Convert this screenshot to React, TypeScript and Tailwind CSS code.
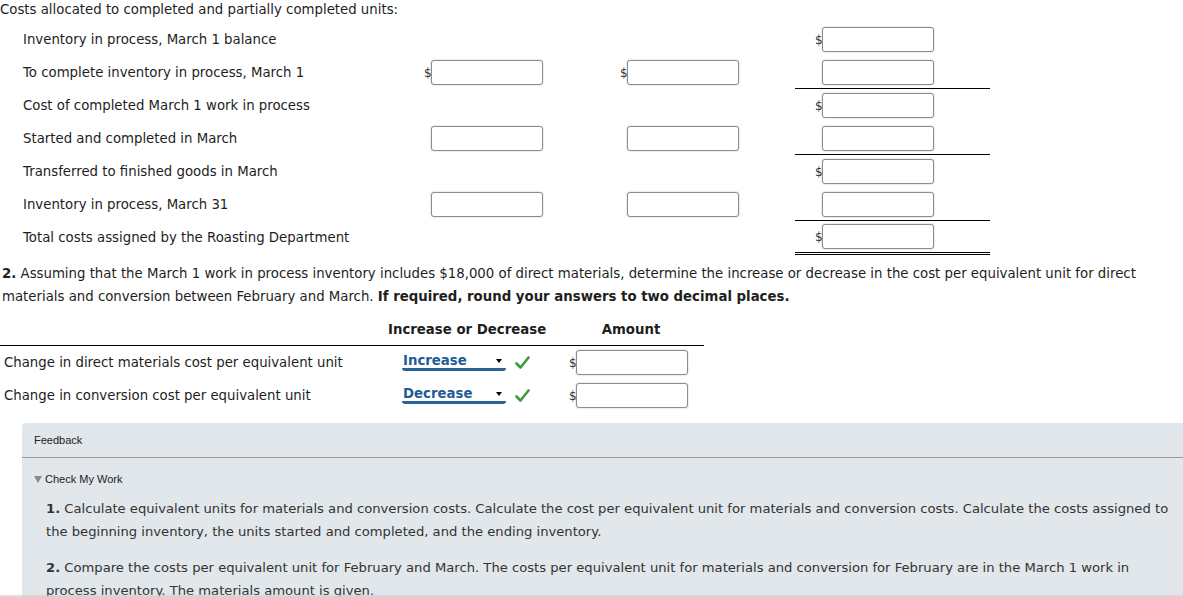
import React from "react";

const font = "font-['DejaVu_Sans',Verdana,sans-serif]";

const Box = () => (
  <div className="h-[25px] w-[112px] rounded-[3px] border border-[#8c8c8c] bg-white shadow-[0_0_2px_rgba(0,0,0,0.25)]" />
);

const Cell = ({ dollar, box }: { dollar?: boolean; box?: boolean }) => (
  <div className="flex items-center">
    <span className={`w-[7px] text-[12px] text-[#333] ${dollar ? "" : "invisible"}`}>$</span>
    {box && <Box />}
  </div>
);

type Row = {
  label: string;
  c1?: [boolean, boolean];
  c2?: [boolean, boolean];
  c3: [boolean, boolean];
  line?: "single" | "double";
};

const rows: Row[] = [
  { label: "Inventory in process, March 1 balance", c3: [true, true] },
  { label: "To complete inventory in process, March 1", c1: [true, true], c2: [true, true], c3: [false, true], line: "single" },
  { label: "Cost of completed March 1 work in process", c3: [true, true] },
  { label: "Started and completed in March", c1: [false, true], c2: [false, true], c3: [false, true], line: "single" },
  { label: "Transferred to finished goods in March", c3: [true, true] },
  { label: "Inventory in process, March 31", c1: [false, true], c2: [false, true], c3: [false, true], line: "single" },
  { label: "Total costs assigned by the Roasting Department", c3: [true, true], line: "double" },
];

const Check = () => (
  <svg width="15" height="14" viewBox="0 0 15 14" className="shrink-0">
    <path d="M1.5 7.5 L5.5 11.5 L13.5 1.5" fill="none" stroke="#3d9b3d" strokeWidth="2.6" strokeLinecap="round" strokeLinejoin="round" />
  </svg>
);

const Select = ({ value }: { value: string }) => (
  <div className="flex h-[17px] w-[104px] items-center justify-between rounded-[3px] border-b-[3px] border-[#2a6496] bg-white pl-[1px] pr-[4px]">
    <span className="text-[13.3px] font-bold leading-none text-[#1f5c96]">{value}</span>
    <span className="h-0 w-0 border-x-[3.5px] border-t-[4px] border-x-transparent border-t-black" />
  </div>
);

export default function App() {
  return (
    <div className={`${font} relative h-[597px] w-[1183px] overflow-hidden bg-white text-[13.3px] text-[#1e1e1e]`}>
      <div className="h-[23px] pt-[1px] leading-[17px]">Costs allocated to completed and partially completed units:</div>

      <div className="grid grid-cols-[417px_196px_182px_195px]">
        {rows.map((r) => (
          <React.Fragment key={r.label}>
            <div className="flex h-[33px] items-center pl-[23px] pt-[1px]">{r.label}</div>
            <div className="flex h-[33px] items-center pl-[7px]">
              {r.c1 && <Cell dollar={r.c1[0]} box={r.c1[1]} />}
            </div>
            <div className="flex h-[33px] items-center pl-[7px]">
              {r.c2 && <Cell dollar={r.c2[0]} box={r.c2[1]} />}
            </div>
            <div
              className={`flex h-[33px] items-center pl-[20px] ${
                r.line === "single"
                  ? "border-b border-black"
                  : r.line === "double"
                  ? "h-[34px] border-b-[3px] border-double border-black"
                  : ""
              }`}
            >
              <Cell dollar={r.c3[0]} box={r.c3[1]} />
            </div>
          </React.Fragment>
        ))}
      </div>

      <p className="mt-[7px] pl-[2px] leading-[23px]">
        <b>2.</b> Assuming that the March 1 work in process inventory includes $18,000 of direct materials, determine
        the increase or decrease in the cost per equivalent unit for direct
        <br />
        materials and conversion between February and March. <b>If required, round your answers to two decimal places.</b>
      </p>

      <div className="mt-[5px] w-[704px]">
        <div className="grid h-[33px] grid-cols-[388px_158px_158px] items-center border-b border-black pt-[1px] font-bold">
          <div />
          <div className="whitespace-nowrap text-center">Increase or Decrease</div>
          <div className="whitespace-nowrap pl-[12px] text-center">Amount</div>
        </div>
        {[
          ["Change in direct materials cost per equivalent unit", "Increase"],
          ["Change in conversion cost per equivalent unit", "Decrease"],
        ].map(([label, v]) => (
          <div key={label} className="grid h-[33px] grid-cols-[388px_158px_158px] items-center">
            <div className="pl-[4px] pt-[1px]">{label}</div>
            <div className="flex items-center gap-[9px] pl-[14px]">
              <Select value={v} />
              <Check />
            </div>
            <div className="flex items-center pl-[23px]">
              <span className="w-[7px] text-[12px] text-[#333]">$</span>
              <Box />
            </div>
          </div>
        ))}
      </div>

      <div className="ml-[22px] mt-[11px] h-[200px] rounded-tl-[4px] bg-[#e1e7ea] text-[13.15px] text-[#333]">
        <div className="flex h-[35px] items-center border-b border-[#9a9a9a] pl-[12px] font-['Liberation_Sans',Arial,sans-serif] text-[11px] text-[#222]">
          Feedback
        </div>
        <div className="flex h-[39px] items-center gap-[3px] pl-[12px] pt-[4px] font-['Liberation_Sans',Arial,sans-serif] text-[11px] text-[#222]">
          <span className="h-0 w-0 border-x-[4px] border-t-[7px] border-x-transparent border-t-[#8a8a8a]" />
          Check My Work
        </div>
        <p className="pl-[24px] leading-[23px]">
          <b>1.</b> Calculate equivalent units for materials and conversion costs. Calculate the cost per equivalent
          unit for materials and conversion costs. Calculate the costs assigned to
          <br />
          the beginning inventory, the units started and completed, and the ending inventory.
        </p>
        <p className="pl-[24px] pt-[13px] leading-[23px]">
          <b>2.</b> Compare the costs per equivalent unit for February and March. The costs per equivalent unit for
          materials and conversion for February are in the March 1 work in
          <br />
          process inventory. The materials amount is given.
        </p>
      </div>
      <div className="absolute bottom-0 left-0 h-[3px] w-full bg-gradient-to-b from-transparent to-[#cfcfcf]" />
    </div>
  );
}
